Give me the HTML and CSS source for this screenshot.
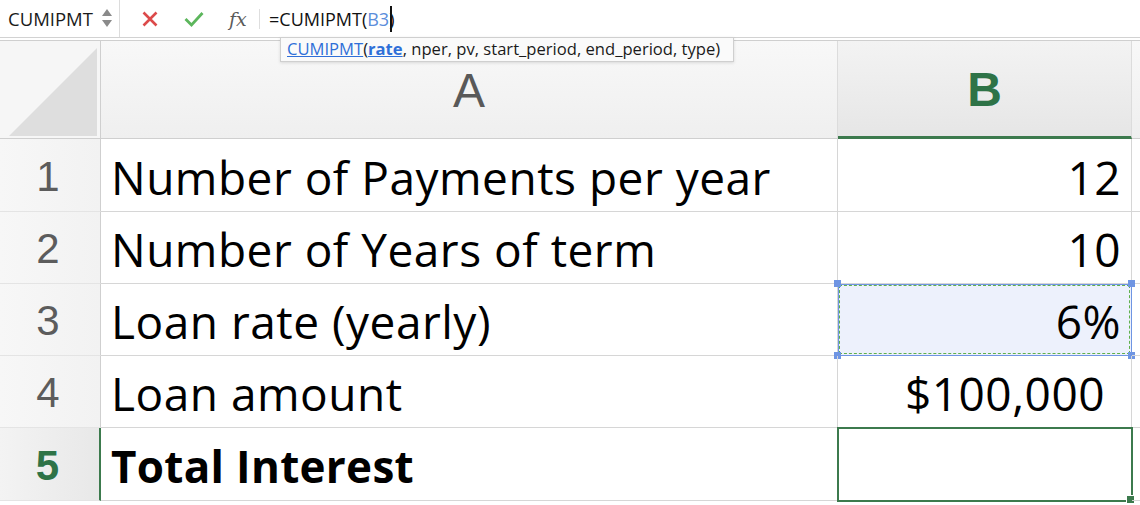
FILE: index.html
```html
<!DOCTYPE html>
<html>
<head>
<meta charset="utf-8">
<link rel="stylesheet" href="styles.css">
</head>
<body>
<div class="app">
  <div class="formula-bar">
    <div class="name-box">
      <span class="name-text">CUMIPMT</span>
      <svg class="stepper" width="12" height="22" viewBox="0 0 12 22">
        <path d="M6 2 L11 9 L1 9 Z" fill="#8a8a8a"/>
        <path d="M6 20 L11 13 L1 13 Z" fill="#8a8a8a"/>
      </svg>
    </div>
    <div class="actions">
      <svg class="icon" width="18" height="18" viewBox="0 0 18 18">
        <path d="M2.5 2.5 L15.5 15.5 M15.5 2.5 L2.5 15.5" stroke="#dc4a4a" stroke-width="2.6" stroke-linecap="butt"/>
      </svg>
      <svg class="icon" width="20" height="18" viewBox="0 0 20 18">
        <path d="M1.5 9 L7.5 15 L18.5 3" stroke="#5cb65c" stroke-width="2.8" fill="none"/>
      </svg>
      <span class="fx">fx</span>
    </div>
    <div class="sep"></div>
    <div class="formula">=CUMIPMT(<span class="ref">B3</span>)<span class="caret"></span></div>
    <div class="tooltip"><a class="fn">CUMIPMT</a>(<a class="arg">rate</a>, nper, pv, start_period, end_period, type)</div>
  </div>
  <div class="sheet">
    <div class="corner">
      <svg width="88" height="88" viewBox="0 0 88 88"><path d="M88 0 L88 88 L0 88 Z" fill="#dedede"/></svg>
    </div>
    <div class="colhead">A</div>
    <div class="colhead active">B</div>
    <div class="colhead edge"></div>

    <div class="rowhead">1</div>
    <div class="cell">Number of Payments per year</div>
    <div class="cell num">12</div>
    <div class="cell edge"></div>

    <div class="rowhead">2</div>
    <div class="cell">Number of Years of term</div>
    <div class="cell num">10</div>
    <div class="cell edge"></div>

    <div class="rowhead">3</div>
    <div class="cell">Loan rate (yearly)</div>
    <div class="cell num ref-cell">6%
      <span class="ants"></span>
      <span class="handle tl"></span><span class="handle tr"></span>
      <span class="handle bl"></span><span class="handle br"></span>
    </div>
    <div class="cell edge"></div>

    <div class="rowhead">4</div>
    <div class="cell">Loan amount</div>
    <div class="cell num acct">$100,000</div>
    <div class="cell edge"></div>

    <div class="rowhead active">5</div>
    <div class="cell bold">Total Interest</div>
    <div class="cell num selected"><span class="fill-handle"></span></div>
    <div class="cell edge"></div>
  </div>
</div>
</body>
</html>
```

FILE: styles.css
```css
html, body {
  margin: 0;
  padding: 0;
  background: #ffffff;
}
.app {
  width: 1140px;
  height: 505px;
  overflow: hidden;
  font-family: "Liberation Sans", Arial, sans-serif;
}
.formula-bar {
  position: relative;
  height: 37px;
  border-bottom: 1px solid #d2d2d2;
  display: flex;
  align-items: center;
  margin-bottom: 2px;
}
.name-box {
  width: 120px;
  height: 37px;
  border-right: 1px solid #dcdcdc;
  display: flex;
  align-items: center;
  box-sizing: border-box;
  padding-left: 8px;
}
.name-text {
  font-family: "Open Sans", sans-serif;
  font-size: 18.5px;
  color: #1a1a1a;
  width: 93px;
}
.stepper {
  display: block;
  margin-top: -1px;
}
.actions {
  display: flex;
  align-items: center;
  padding-left: 21px;
  gap: 25px;
  width: 118px;
}
.icon { display: block; }
.fx {
  font-family: "DejaVu Serif", "Liberation Serif", serif;
  font-style: italic;
  font-size: 19px;
  color: #5a5a5a;
}
.sep {
  width: 1px;
  height: 20px;
  background: #dedede;
}
.formula {
  font-family: "Open Sans", sans-serif;
  font-size: 18px;
  color: #111;
  margin-left: 9px;
  display: flex;
  align-items: center;
}
.ref { color: #5b8edb; }
.caret {
  display: inline-block;
  width: 1.5px;
  height: 26px;
  background: #111;
  margin-left: -4px;
}
.tooltip {
  position: absolute;
  left: 280px;
  top: 37px;
  height: 25px;
  box-sizing: border-box;
  padding: 0 6px;
  width: 454px;
  background: #fafafa;
  border: 1px solid #cfcfcf;
  box-shadow: 0 1px 3px rgba(0,0,0,0.12);
  font-family: "Open Sans", sans-serif;
  font-size: 16.6px;
  color: #1a1a1a;
  line-height: 22px;
  z-index: 5;
  white-space: nowrap;
}
.tooltip .fn {
  color: #2f6fd8;
  text-decoration: underline;
}
.tooltip .arg {
  color: #2f6fd8;
  font-weight: bold;
  text-decoration: underline;
}
.sheet {
  display: grid;
  grid-template-columns: 101px 737px 294px 1fr;
  grid-template-rows: 98px 73px 72px 72px 72px 73px;
  border-top: 1px solid #cfcfcf;
}
.corner {
  background: #f6f6f6;
  border-right: 1px solid #cfcfcf;
  border-bottom: 1px solid #cfcfcf;
  display: flex;
  align-items: flex-end;
  justify-content: flex-end;
  padding: 0 3px 2px 0;
  box-sizing: border-box;
}
.corner svg { display: block; }
.colhead {
  background: linear-gradient(#f8f8f8, #efefef);
  border-right: 1px solid #dcdcdc;
  border-bottom: 1px solid #cfcfcf;
  display: flex;
  align-items: center;
  justify-content: center;
  font-size: 48px;
  color: #595959;
  box-sizing: border-box;
  padding-top: 2px;
}
.colhead.active {
  background: linear-gradient(#f3f3f3, #e6e6e6);
  color: #2e7347;
  font-weight: bold;
  border-bottom: 3px solid #3c7a4d;
}
.colhead.edge { border-right: none; }
.rowhead {
  background: linear-gradient(90deg, #f7f7f7, #f2f2f2);
  border-right: 1px solid #cfcfcf;
  border-bottom: 1px solid #e4e4e4;
  display: flex;
  align-items: center;
  justify-content: center;
  padding: 3px 4px 0 0;
  font-size: 42px;
  color: #5c5c5c;
  box-sizing: border-box;
}
.rowhead.active {
  background: linear-gradient(90deg, #f3f3f3, #e8e8e8);
  color: #2e7347;
  font-weight: bold;
  border-right: 2px solid #3c7a4d;
}
.cell {
  position: relative;
  border-right: 1px solid #d6d6d6;
  border-bottom: 1px solid #d6d6d6;
  box-sizing: border-box;
  display: flex;
  align-items: center;
  padding: 3px 10px 0 10px;
  font-family: "Open Sans", sans-serif;
  font-size: 46px;
  letter-spacing: 0.5px;
  color: #000;
  white-space: nowrap;
}
.cell.edge { border-right: none; }
.cell.num { justify-content: flex-end; }
.cell.acct { padding-right: 26px; }
.cell.bold { font-weight: bold; font-size: 44px; letter-spacing: 0.3px; }
.ref-cell {
  background: #edf1fc;
  outline: 1px solid #6f95e3;
  outline-offset: -1px;
}
.ants {
  position: absolute;
  inset: 1px;
  border: 1.5px dashed #5fb04b;
  pointer-events: none;
}
.handle {
  position: absolute;
  width: 7px;
  height: 7px;
  background: #6f95e3;
}
.handle.tl { left: -4px; top: -4px; }
.handle.tr { right: -4px; top: -4px; }
.handle.bl { left: -4px; bottom: -4px; }
.handle.br { right: -4px; bottom: -4px; }
.selected {
  outline: 2px solid #3c7a4d;
  outline-offset: -1px;
}
.fill-handle {
  position: absolute;
  right: -4px;
  bottom: -4px;
  width: 7px;
  height: 7px;
  background: #3c7a4d;
  border: 1px solid #fff;
}
```
